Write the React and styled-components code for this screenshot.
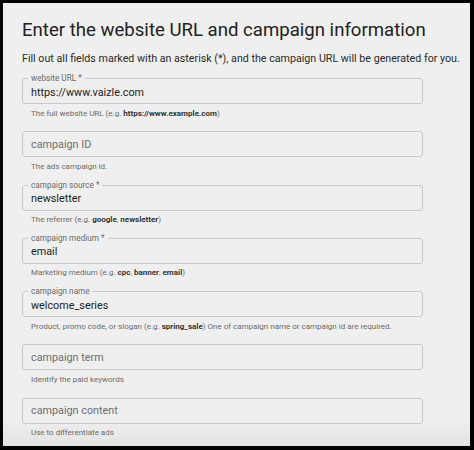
import React from 'react';
import styled, { createGlobalStyle } from 'styled-components';

const GlobalStyle = createGlobalStyle`
  html, body {
    margin: 0;
    padding: 0;
    background: #000;
  }
  body {
    font-family: Roboto, "Liberation Sans", Arial, sans-serif;
  }
`;

const Frame = styled.div`
  width: 474px;
  height: 450px;
  box-sizing: border-box;
  padding: 3px 4px 4px 3px;
  background: #000;
`;

const Panel = styled.div`
  height: 100%;
  box-sizing: border-box;
  overflow: hidden;
  padding: 13px 0 0 19px;
  background: linear-gradient(to bottom, #efefef 0%, #efefef 94%, #e3e3e3 100%);
`;

const Title = styled.h1`
  margin: 0;
  font-size: 18.6px;
  font-weight: 400;
  line-height: 28px;
  color: #222;
`;

const Intro = styled.p`
  margin: 8px 0 0;
  font-size: 10.7px;
  line-height: 14px;
  color: #2a2a2a;
  white-space: nowrap;
`;

const FieldList = styled.div`
  display: flex;
  flex-direction: column;
  margin-top: 12px;
`;

const Field = styled.div`
  display: flex;
  flex-direction: column;
  height: 53.3px;
`;

const Box = styled.div`
  position: relative;
  width: 401px;
  height: 26px;
  box-sizing: border-box;
  border: 1px solid #c9c9c9;
  border-radius: 3px;
  padding: 0 8px;
  display: flex;
  align-items: center;
`;

const Label = styled.span`
  position: absolute;
  top: -6px;
  left: 5px;
  padding: 0 3px;
  font-size: 8.2px;
  line-height: 10px;
  color: #6a6a6a;
  background: #efefef;
`;

const Value = styled.span`
  font-size: 10.8px;
  color: ${p => (p.$placeholder ? '#6e6e6e' : '#222')};
  padding-top: ${p => (p.$placeholder ? '0' : '2px')};
`;

const Helper = styled.div`
  margin: 3.5px 0 0 9px;
  font-size: 8px;
  line-height: 11px;
  color: #6b6b6b;
  white-space: nowrap;

  b {
    font-weight: 700;
    color: #333;
  }
`;

const fields = [
  { label: 'website URL *', value: 'https://www.vaizle.com', help: <>The full website URL (e.g. <b>https://www.example.com</b>)</> },
  { placeholder: 'campaign ID', help: 'The ads campaign id.' },
  { label: 'campaign source *', value: 'newsletter', help: <>The referrer (e.g. <b>google</b>, <b>newsletter</b>)</> },
  { label: 'campaign medium *', value: 'email', help: <>Marketing medium (e.g. <b>cpc</b>, <b>banner</b>, <b>email</b>)</> },
  { label: 'campaign name', value: 'welcome_series', help: <>Product, promo code, or slogan (e.g. <b>spring_sale</b>) One of campaign name or campaign id are required.</> },
  { placeholder: 'campaign term', help: 'Identify the paid keywords' },
  { placeholder: 'campaign content', help: 'Use to differentiate ads' },
];

export default function App() {
  return (
    <>
      <GlobalStyle />
      <Frame>
        <Panel>
          <Title>Enter the website URL and campaign information</Title>
          <Intro>Fill out all fields marked with an asterisk (*), and the campaign URL will be generated for you.</Intro>
          <FieldList>
            {fields.map((f, i) => (
              <Field key={i}>
                <Box>
                  {f.label && <Label>{f.label}</Label>}
                  {f.label
                    ? <Value>{f.value}</Value>
                    : <Value $placeholder>{f.placeholder}</Value>}
                </Box>
                <Helper>{f.help}</Helper>
              </Field>
            ))}
          </FieldList>
        </Panel>
      </Frame>
    </>
  );
}
